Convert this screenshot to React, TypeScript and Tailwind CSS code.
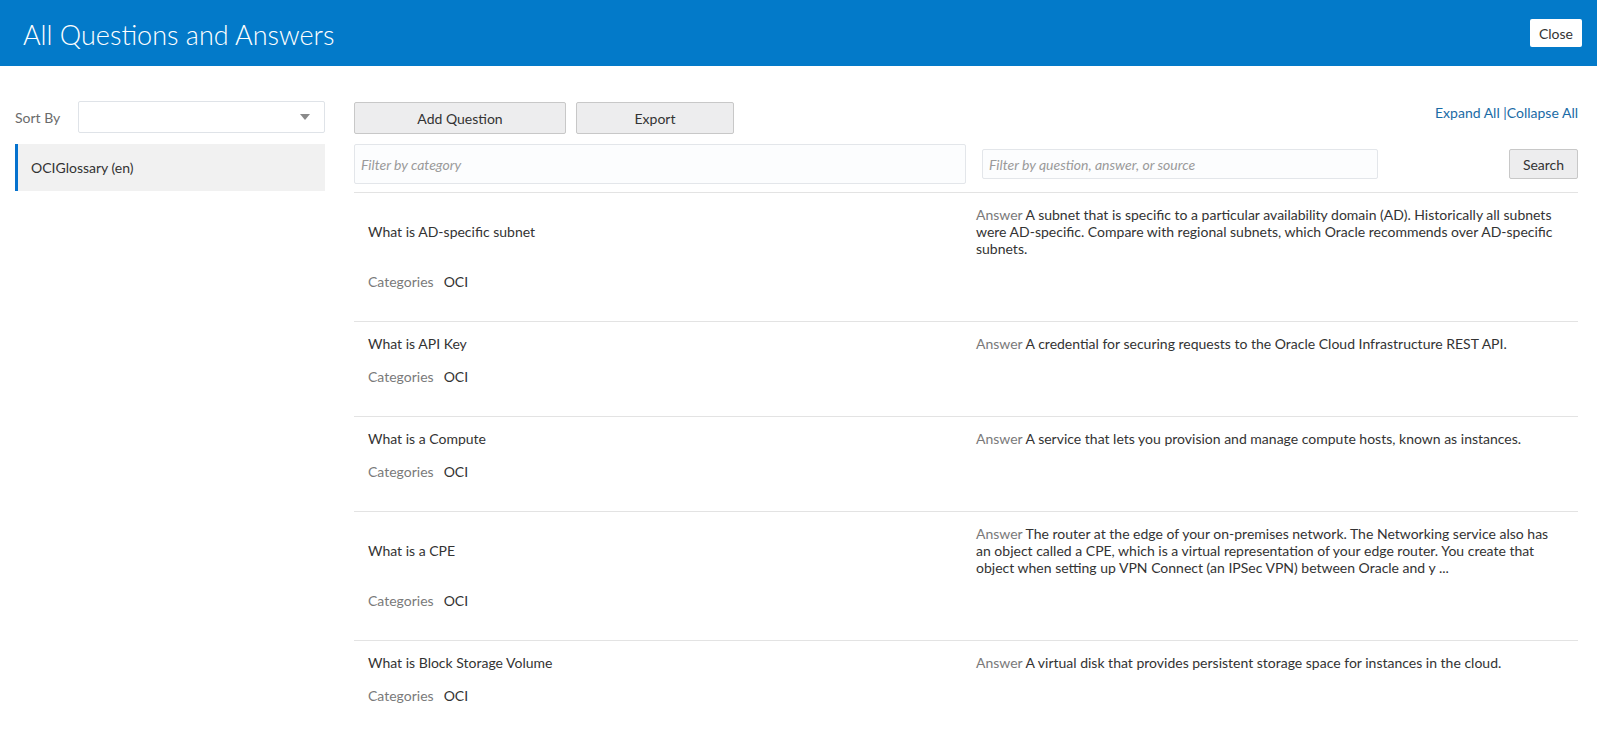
import React from "react";

// Q&A list modal: blue header, left source list, filters + rows of question/answer.

type Item = { question: string; answer: string };

const items: Item[] = [
  {
    question: "What is AD-specific subnet",
    answer:
      "A subnet that is specific to a particular availability domain (AD). Historically all subnets were AD-specific. Compare with regional subnets, which Oracle recommends over AD-specific subnets.",
  },
  {
    question: "What is API Key",
    answer: "A credential for securing requests to the Oracle Cloud Infrastructure REST API.",
  },
  {
    question: "What is a Compute",
    answer: "A service that lets you provision and manage compute hosts, known as instances.",
  },
  {
    question: "What is a CPE",
    answer:
      "The router at the edge of your on-premises network. The Networking service also has an object called a CPE, which is a virtual representation of your edge router. You create that object when setting up VPN Connect (an IPSec VPN) between Oracle and y ...",
  },
  {
    question: "What is Block Storage Volume",
    answer: "A virtual disk that provides persistent storage space for instances in the cloud.",
  },
];

function Row({ item }: { item: Item }) {
  return (
    <div className="border-b border-[#e3e3e3] pt-[13px] pb-[31px]">
      <div className="grid grid-cols-2 items-center">
        <div className="pl-[14px] text-[#333]">{item.question}</div>
        <div className="pl-[10px] pr-[17px] text-[#333]">
          <span className="text-[#7a7a7a]">Answer</span> {item.answer}
        </div>
      </div>
      <div className="mt-4 flex gap-[10px] pl-[14px]">
        <span className="text-[#7a7a7a]">Categories</span>
        <span className="text-[#333]">OCI</span>
      </div>
    </div>
  );
}

export default function App() {
  return (
    <div
      className="min-h-screen bg-white text-[14px] leading-[17px] text-[#333]"
      style={{ fontFamily: 'Lato, "Open Sans", "Liberation Sans", sans-serif' }}
    >
      <header className="flex h-[66px] items-center justify-between bg-[#037ac9] pl-[23px] pr-[15px]">
        <h1 className="pt-[3px] text-[27px] font-light leading-none text-white">
          All Questions and Answers
        </h1>
        <button
          type="button"
          className="h-[28px] w-[52px] rounded-[2px] bg-white text-[14px] text-[#333]"
        >
          Close
        </button>
      </header>

      <div className="flex pt-[35px] pl-[15px] pr-[19px]">
        <aside className="w-[310px] shrink-0">
          <div className="flex items-center justify-between">
            <span className="text-[#6b6b6b]">Sort By</span>
            <div className="flex h-[32px] w-[247px] items-center justify-end rounded-[2px] border border-[#dfe3e8] bg-white pr-[14px]">
              <svg width="10" height="6" viewBox="0 0 10 6">
                <path d="M0 0h10L5 6z" fill="#8a8a8a" />
              </svg>
            </div>
          </div>
          <div className="mt-[11px] flex h-[47px] items-center border-l-[3px] border-[#0572ce] bg-[#f1f1f1] pl-[13px] text-[#333]">
            OCIGlossary (en)
          </div>
        </aside>

        <main className="ml-[29px] flex-1">
          <div className="flex items-start justify-between">
            <div className="mt-[1px] flex gap-[10px]">
              <button
                type="button"
                className="h-[32px] w-[212px] rounded-[2px] border border-[#c8c8c8] bg-[#ededee] text-[#333]"
              >
                Add Question
              </button>
              <button
                type="button"
                className="h-[32px] w-[158px] rounded-[2px] border border-[#c8c8c8] bg-[#ededee] text-[#333]"
              >
                Export
              </button>
            </div>
            <div className="pt-[3px] text-[#1a6ba6]">
              <a href="#">Expand All</a> |<a href="#">Collapse All</a>
            </div>
          </div>

          <div className="mt-[10px] flex items-center pb-[8px]">
            <div className="w-1/2">
              <input
                placeholder="Filter by category"
                className="h-[40px] w-full rounded-[2px] border border-[#e3e6ea] bg-[#fcfdfe] px-[6px] italic placeholder:text-[#9a9a9a]"
              />
            </div>
            <div className="flex w-1/2 items-center justify-between pl-[16px]">
              <input
                placeholder="Filter by question, answer, or source"
                className="h-[30px] w-[396px] rounded-[2px] border border-[#e3e6ea] bg-[#fcfdfe] px-[6px] italic placeholder:text-[#9a9a9a]"
              />
              <button
                type="button"
                className="h-[30px] w-[69px] rounded-[2px] border border-[#c8c8c8] bg-[#ededee] text-[#333]"
              >
                Search
              </button>
            </div>
          </div>

          <div className="border-t border-[#e3e3e3]">
            {items.map((item) => (
              <Row key={item.question} item={item} />
            ))}
          </div>
        </main>
      </div>
    </div>
  );
}
